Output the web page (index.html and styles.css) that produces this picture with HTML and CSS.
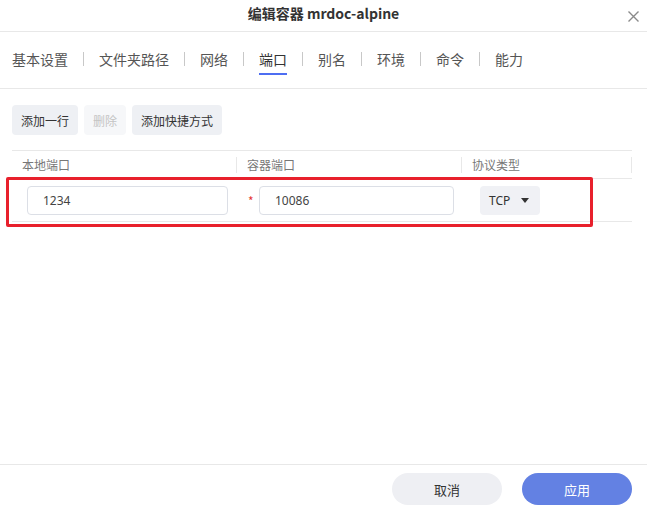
FILE: index.html
```html
<!DOCTYPE html>
<html lang="zh-CN">

<head>
    <meta charset="UTF-8">
    <meta name="viewport" content="width=device-width, initial-scale=1.0">
    <title>编辑容器</title>
    <link rel="stylesheet" href="styles.css">
</head>

<body>

    <div class="dialog">
        <div class="dialog-header">
            <span class="dialog-title">编辑容器 mrdoc-alpine</span>
            <span class="dialog-close">
                <svg width="11" height="11" viewBox="0 0 11 11">
                    <path d="M0.5 0.5 L10.5 10.5 M10.5 0.5 L0.5 10.5" stroke="#8a8a8a" stroke-width="1.4" fill="none" />
                </svg>
            </span>
        </div>

        <div class="tabs">
            <span class="tab">基本设置</span>
            <span class="tab-sep"></span>
            <span class="tab">文件夹路径</span>
            <span class="tab-sep"></span>
            <span class="tab">网络</span>
            <span class="tab-sep"></span>
            <span class="tab active">端口</span>
            <span class="tab-sep"></span>
            <span class="tab">别名</span>
            <span class="tab-sep"></span>
            <span class="tab">环境</span>
            <span class="tab-sep"></span>
            <span class="tab">命令</span>
            <span class="tab-sep"></span>
            <span class="tab">能力</span>
        </div>

        <div class="dialog-body">
            <div class="toolbar">
                <button type="button" class="btn-light">添加一行</button>
                <button type="button" class="btn-light" disabled>删除</button>
                <button type="button" class="btn-light">添加快捷方式</button>
            </div>

            <div class="port-table">
                <div class="row head">
                    <div class="cell">本地端口</div>
                    <div class="cell">容器端口</div>
                    <div class="cell">协议类型</div>
                </div>
                <div class="row data">
                    <div class="cell cell-local">
                        <input type="text" class="field field-local" value="1234">
                    </div>
                    <div class="cell cell-container">
                        <span class="required">*</span>
                        <input type="text" class="field field-container" value="10086">
                    </div>
                    <div class="cell cell-proto">
                        <div class="select">
                            <span>TCP</span>
                            <span class="caret"></span>
                        </div>
                    </div>
                </div>
                <div class="highlight"></div>
            </div>
        </div>

        <div class="dialog-footer">
            <button type="button" class="btn-round btn-cancel">取消</button>
            <button type="button" class="btn-round btn-apply">应用</button>
        </div>
    </div>

</body>

</html>
```

FILE: styles.css
```css
body {
    margin: 0;
    padding: 0;
    background-color: #fff;
    font-family: "Noto Sans CJK SC", "Liberation Sans", sans-serif;
    color: #333;
}

.dialog {
    width: 647px;
    height: 508px;
    display: flex;
    flex-direction: column;
}

.dialog-header {
    height: 31px;
    border-bottom: 1px solid #e8e8e8;
    display: flex;
    align-items: center;
    justify-content: center;
    position: relative;
}

.dialog-title {
    font-size: 14px;
    font-weight: bold;
    color: #333;
    margin-top: -6px;
}

.dialog-close {
    position: absolute;
    right: 8px;
    top: 11px;
    display: flex;
}

.tabs {
    height: 56px;
    border-bottom: 1px solid #e8e8e8;
    display: flex;
    align-items: center;
    padding-left: 12px;
    gap: 15px;
}

.tab {
    font-size: 14px;
    color: #555;
    position: relative;
    line-height: 20px;
    margin-top: -2px;
}

.tab.active {
    color: #333;
}

.tab.active::after {
    content: "";
    position: absolute;
    left: 0;
    right: 0;
    bottom: -6px;
    height: 2px;
    background-color: #4d6ef2;
}

.tab-sep {
    width: 1px;
    height: 14px;
    background-color: #c8c8c8;
    margin-top: -2px;
}

.dialog-body {
    flex: 1;
    padding: 16px 15px 0 12px;
}

.toolbar {
    display: flex;
    gap: 6px;
}

.btn-light {
    height: 30px;
    padding: 0 9px;
    border: none;
    border-radius: 4px;
    background-color: #eef0f4;
    color: #333;
    font-family: inherit;
    font-size: 12px;
    cursor: pointer;
}

.btn-light:disabled {
    background-color: #f6f7f9;
    color: #c4c4c4;
    cursor: default;
}

.port-table {
    margin-top: 15px;
    width: 620px;
    border-top: 1px solid #e8e8e8;
    position: relative;
}

.row {
    display: grid;
    grid-template-columns: 225px 225px 170px;
    border-bottom: 1px solid #e8e8e8;
}

.row.head .cell {
    height: 27px;
    font-size: 12px;
    color: #777;
    display: flex;
    align-items: center;
    padding-left: 10px;
    position: relative;
}

.row.head .cell::after {
    content: "";
    position: absolute;
    right: 0;
    top: 6px;
    width: 1px;
    height: 16px;
    background-color: #e8e8e8;
}

.row.data .cell {
    height: 42px;
    display: flex;
    align-items: center;
}

.cell-local {
    padding-left: 15px;
}

.cell-container {
    padding-left: 11px;
}

.cell-proto {
    padding-left: 18px;
}

.field {
    height: 29px;
    box-sizing: border-box;
    border: 1px solid #dcdfe6;
    border-radius: 4px;
    padding: 0 15px;
    font-family: "Noto Sans", "Liberation Sans", sans-serif;
    font-size: 12px;
    color: #444;
    outline: none;
}

.field-local {
    width: 201px;
}

.field-container {
    width: 195px;
}

.required {
    color: #e53935;
    font-size: 12px;
    width: 11px;
}

.select {
    width: 60px;
    height: 29px;
    box-sizing: border-box;
    border-radius: 4px;
    background-color: #f0f1f5;
    display: flex;
    align-items: center;
    padding-left: 9px;
    gap: 11px;
    font-family: "Noto Sans", "Liberation Sans", sans-serif;
    font-size: 12px;
    color: #333;
}

.caret {
    width: 0;
    height: 0;
    border-left: 4px solid transparent;
    border-right: 4px solid transparent;
    border-top: 5px solid #333;
}

.highlight {
    position: absolute;
    left: -6px;
    top: 26px;
    width: 581px;
    height: 44px;
    border: 3px solid #e8202c;
    border-radius: 2px;
    pointer-events: none;
}

.dialog-footer {
    height: 44px;
    box-sizing: border-box;
    border-top: 1px solid #e8e8e8;
    display: flex;
    justify-content: flex-end;
    align-items: flex-start;
    padding: 8px 15px 0 0;
    gap: 20px;
}

.btn-round {
    width: 110px;
    height: 32px;
    border: none;
    border-radius: 16px;
    font-family: inherit;
    font-size: 13px;
    cursor: pointer;
}

.btn-cancel {
    background-color: #eeeff3;
    color: #333;
}

.btn-apply {
    background-color: #6381e3;
    color: #fff;
}
```
